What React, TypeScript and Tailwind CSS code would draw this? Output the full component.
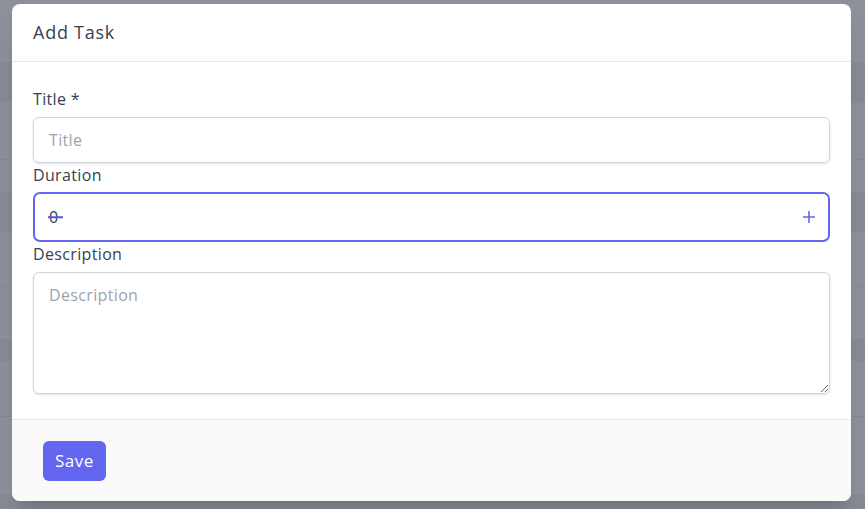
import React from "react";

const font = { fontFamily: '"Open Sans", "Noto Sans", sans-serif' };

export default function App() {
  return (
    <div className="relative w-[865px] h-[509px] overflow-hidden bg-[#8c909a]" style={font}>
      {/* dimmed page content behind the modal */}
      <div className="flex flex-col">
        <div className="h-[62px]" />
        <div className="h-[40px] bg-[#868a94]" />
        <div className="h-[58px] border-b border-[#858993]" />
        <div className="h-[32px]" />
        <div className="h-[40px] bg-[#868a94]" />
        <div className="h-[55px] border-b border-[#858993]" />
        <div className="h-[52px]" />
        <div className="h-[22px] bg-[#868a94]" />
        <div className="h-[56px] border-b border-[#858993]" />
        <div className="h-[78px]" />
        <div className="h-[20px] bg-[#868a94]" />
      </div>

      {/* modal */}
      <div className="absolute left-[12px] top-[4px] w-[839px] h-[497px] bg-white rounded-[8px] shadow-xl flex flex-col overflow-hidden">
        <div className="h-[58px] flex items-center px-[21px] border-b border-[#e5e7eb] shrink-0">
          <h2 className="text-[18px] text-[#374151] tracking-[0.75px]">Add Task</h2>
        </div>

        <div className="px-[21px] pt-[25px] pb-[25px] flex flex-col tracking-[0.35px]">
          <label className="text-[16px] leading-6 text-[#374151]">Title *</label>
          <input
            placeholder="Title"
            className="mt-[6px] h-[46px] w-full rounded-[6px] border border-[#d1d5db] px-[15px] text-[16px] tracking-[0.35px] text-[#374151] placeholder:text-[#9ca3af] outline-none shadow-sm"
          />

          <label className="text-[16px] leading-6 text-[#374151]">Duration</label>
          <div className="mt-[5px] h-[50px] w-full rounded-[7px] border-2 border-[#6366f1] flex items-center pl-[14px] pr-[12px] relative">
            <span className="text-[16px] text-[#374151]">0</span>
            <span className="absolute left-[13px] top-1/2 -translate-y-1/2 w-[15px] h-[1.5px] bg-[#5458d6]" />
            <span className="ml-auto text-[#6366f1]">
              <svg width="14" height="14" viewBox="0 0 14 14" fill="none" stroke="currentColor" strokeWidth="1.6">
                <path d="M7 1v12M1 7h12" />
              </svg>
            </span>
          </div>

          <label className="text-[16px] leading-6 text-[#374151]">Description</label>
          <textarea
            placeholder="Description"
            className="mt-[6px] h-[122px] w-full rounded-[6px] border border-[#d1d5db] px-[15px] py-[10px] text-[16px] tracking-[0.35px] text-[#374151] placeholder:text-[#9ca3af] outline-none shadow-sm resize-y"
          />
        </div>

        <div className="flex-1 bg-[#fafafa] border-t border-[#e5e7eb] flex items-center px-[31px]">
          <button className="h-[40px] px-[12px] rounded-[6px] bg-[#6366f1] text-white text-[17px] tracking-[0.5px]">Save</button>
        </div>
      </div>
    </div>
  );
}
